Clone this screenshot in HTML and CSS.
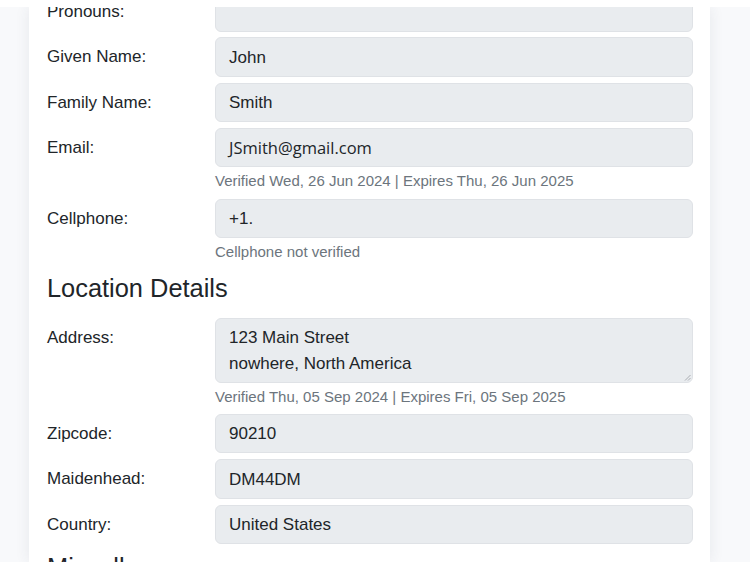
FILE: index.html
```html
<!DOCTYPE html>
<html lang="en">
<head>
<meta charset="utf-8">
<title>Profile</title>
<link rel="stylesheet" href="styles.css">
</head>
<body>
<div class="topbar"></div>
<div class="page">
  <div class="card">
    <div class="content">
      <div class="row">
        <div class="label">Pronouns:</div>
        <div class="field"><div class="control"></div></div>
      </div>
      <div class="row">
        <div class="label">Given Name:</div>
        <div class="field"><div class="control">John</div></div>
      </div>
      <div class="row">
        <div class="label">Family Name:</div>
        <div class="field"><div class="control">Smith</div></div>
      </div>
      <div class="row">
        <div class="label">Email:</div>
        <div class="field">
          <div class="control email">JSmith@gmail.com</div>
          <div class="help">Verified Wed, 26 Jun 2024 | Expires Thu, 26 Jun 2025</div>
        </div>
      </div>
      <div class="row">
        <div class="label">Cellphone:</div>
        <div class="field">
          <div class="control">+1.</div>
          <div class="help">Cellphone not verified</div>
        </div>
      </div>
      <h4 class="section">Location Details</h4>
      <div class="row">
        <div class="label">Address:</div>
        <div class="field">
          <div class="control area">123 Main Street<br>nowhere, North America
            <svg class="grip" width="7" height="7" viewBox="0 0 7 7"><path d="M6.5 1 L1 6.5 M6.5 4 L4 6.5" stroke="#9a9ea3" stroke-width="0.8" fill="none"/></svg>
          </div>
          <div class="help">Verified Thu, 05 Sep 2024 | Expires Fri, 05 Sep 2025</div>
        </div>
      </div>
      <div class="row">
        <div class="label">Zipcode:</div>
        <div class="field"><div class="control">90210</div></div>
      </div>
      <div class="row">
        <div class="label">Maidenhead:</div>
        <div class="field"><div class="control">DM44DM</div></div>
      </div>
      <div class="row">
        <div class="label">Country:</div>
        <div class="field"><div class="control">United States</div></div>
      </div>
      <h4 class="section misc">Miscellaneous</h4>
    </div>
  </div>
</div>
</body>
</html>
```
FILE: styles.css
```css
html, body {
  margin: 0;
  padding: 0;
  background: #ffffff;
}
body {
  font-family: "Liberation Sans", Arial, Helvetica, sans-serif;
  color: #212529;
  font-size: 17px;
}
.topbar {
  height: 7px;
  background: #ffffff;
}
.page {
  height: 555px;
  overflow: hidden;
  background: #f8f9fb;
  padding: 0 40px 0 29px;
}
.card {
  display: flow-root;
  background: #ffffff;
  height: 100%;
  box-shadow: 0 0 14px rgba(40, 50, 80, 0.09);
  padding: 0 17px 0 18px;
}
.content {
  margin-top: -15px;
}
.row {
  display: flex;
  align-items: flex-start;
  margin-bottom: 5.8px;
}
.label {
  box-sizing: border-box;
  width: 168px;
  height: 39.5px;
  flex: none;
  padding-top: 1px;
  line-height: 38.5px;
  font-size: 17px;
}
.field {
  flex: 1;
  min-width: 0;
}
.control {
  position: relative;
  box-sizing: border-box;
  height: 39.5px;
  padding: 6.5px 13px 5.5px;
  line-height: 25.5px;
  font-size: 17px;
  background: #e9ecef;
  border: 1px solid #dfe2e6;
  border-radius: 6px;
  color: #212529;
}
.control.email {
  font-family: "Open Sans", "Liberation Sans", sans-serif;
  font-size: 16.5px;
}
.control.area {
  height: 65px;
}
.grip {
  position: absolute;
  right: 1px;
  bottom: 1px;
}
.help {
  margin-top: 3px;
  line-height: 22px;
  font-size: 15px;
  color: #6c757d;
}
.row:has(.help) {
  margin-bottom: 6.3px;
}
.section {
  margin: 10px 0 14px;
  font-size: 25.4px;
  line-height: 1.2;
  font-weight: 500;
}
.section.misc {
  margin-top: 8px;
}
```
